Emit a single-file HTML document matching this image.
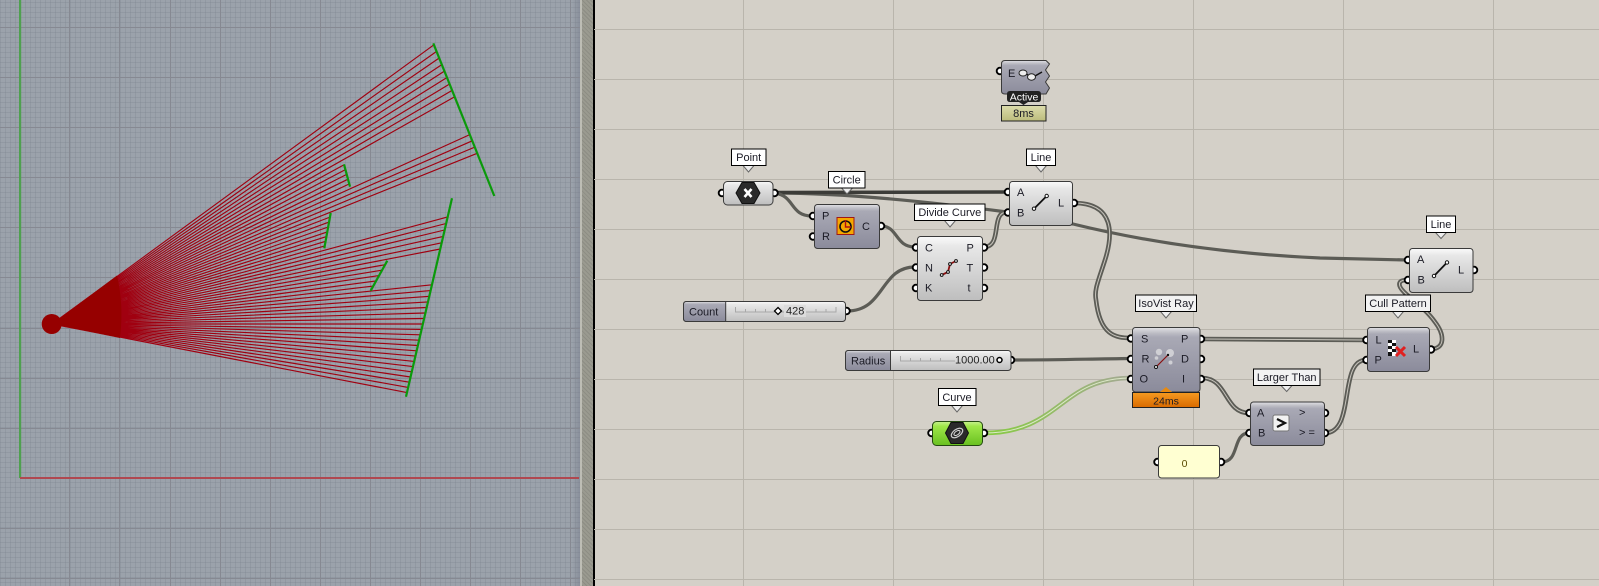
<!DOCTYPE html>
<html><head><meta charset="utf-8"><title>Grasshopper</title>
<style>
html,body{margin:0;padding:0;background:#d4d0c8;width:1599px;height:586px;overflow:hidden}
#v{position:absolute;left:0;top:0;width:580px;height:586px;background-color:#9ba2ab;
background-image:linear-gradient(to right,rgba(120,128,140,.28) 1px,transparent 1px),linear-gradient(to bottom,rgba(120,128,140,.28) 1px,transparent 1px);background-size:5px 5px;background-position:0 2px}
#fade{position:absolute;left:572px;top:0;width:8px;height:586px;background:linear-gradient(to right,rgba(110,115,130,0),rgba(110,115,130,.4))}
#h{position:absolute;left:580px;top:0;width:13px;height:586px;background:repeating-linear-gradient(45deg,#8d8d84 0 1px,#9a9a90 1px 3px);border-left:2px solid #bdbdb5;box-sizing:border-box}
#b{position:absolute;left:593px;top:0;width:1.5px;height:586px;background:#000}
svg{position:absolute;left:0;top:0}
text{font-family:"Liberation Sans",sans-serif;font-size:11px;fill:#1a1a24}
.m{text-anchor:middle}
.c{fill:none;stroke:#b9b5ac;stroke-width:1}
.g{stroke:#868992;stroke-width:1}
.w{fill:none;stroke:#5c5c56;stroke-width:3.2}
.d{fill:none;stroke:#5c5c56;stroke-width:4.6}
.d2{fill:none;stroke:#c8c5bd;stroke-width:1}
.p{fill:#fff;stroke:#000;stroke-width:1.9}
.box{stroke:#3a3a3a;stroke-width:1}
.lb{fill:#fff;stroke:#000;stroke-width:1}
.pt{fill:#eee;stroke:#666;stroke-width:1}
</style></head><body>
<div id="v"></div>
<div id="fade"></div>
<div id="h"></div>
<div id="b"></div>
<svg width="1599" height="586" viewBox="0 0 1599 586">
<defs>
<linearGradient id="dk" x1="0" y1="0" x2="0" y2="1"><stop offset="0" stop-color="#e2e2e6"/><stop offset=".09" stop-color="#bcbcc4"/><stop offset=".15" stop-color="#a9a9b5"/><stop offset="1" stop-color="#8b8b9b"/></linearGradient>
<linearGradient id="lt" x1="0" y1="0" x2="0" y2="1"><stop offset="0" stop-color="#fafafa"/><stop offset=".09" stop-color="#f0f0f0"/><stop offset=".15" stop-color="#e8e8e8"/><stop offset="1" stop-color="#bebebe"/></linearGradient>
<linearGradient id="gr" x1="0" y1="0" x2="0" y2="1"><stop offset="0" stop-color="#c8f090"/><stop offset=".2" stop-color="#9ee648"/><stop offset="1" stop-color="#68c020"/></linearGradient>
<linearGradient id="or" x1="0" y1="0" x2="0" y2="1"><stop offset="0" stop-color="#f59a20"/><stop offset="1" stop-color="#d96a00"/></linearGradient>
<linearGradient id="ms" x1="0" y1="0" x2="0" y2="1"><stop offset="0" stop-color="#dcdcac"/><stop offset="1" stop-color="#bcbc7c"/></linearGradient>
<linearGradient id="gw" gradientUnits="userSpaceOnUse" x1="984" y1="0" x2="1131" y2="0"><stop offset="0" stop-color="#86cc40"/><stop offset="1" stop-color="#a4a894"/></linearGradient>
</defs>

<!-- viewport major grid -->
<g class="g" shape-rendering="crispEdges">
<path d="M69.5 0V586M119.5 0V586M170.5 0V586M220.5 0V586M270.5 0V586M320.5 0V586M370.5 0V586M420.5 0V586M470.5 0V586M520.5 0V586M570.5 0V586"/>
<path d="M0 27.5H580M0 77.5H580M0 127.5H580M0 177.5H580M0 227.5H580M0 277.5H580M0 328.5H580M0 378.5H580M0 428.5H580M0 528.5H580M0 578.5H580"/>
</g>
<rect x="19" y="0" width="2.2" height="478" fill="#4fa04f"/>
<rect x="20" y="477" width="559" height="2" fill="#b04850"/>

<!-- rays -->
<path id="rays" fill="none" stroke="#a00010" stroke-width="1.15"/>
<path d="M52 324L117 275.500Q124 305 120 338Z" fill="#960000"/>
<circle cx="51.7" cy="324" r="10" fill="#960000"/>
<g stroke="#0a9a0a" stroke-width="2.2" fill="none">
<path d="M433.3 43.3L494.3 196"/>
<path d="M344 164.3L350 186.7"/>
<path d="M330.7 213L324.3 248.3"/>
<path d="M452 198.3L406 396.7"/>
<path d="M387.3 260.7L370.7 290.7"/>
</g>

<!-- canvas grid -->
<g class="c" shape-rendering="crispEdges">
<path d="M743.5 0V586M893.5 0V586M1043.5 0V586M1193.5 0V586M1343.5 0V586M1493.5 0V586"/>
<path d="M594 29.5H1599M594 79.5H1599M594 129.5H1599M594 179.5H1599M594 229.5H1599M594 279.5H1599M594 329.5H1599M594 379.5H1599M594 429.5H1599M594 479.5H1599M594 529.5H1599M594 579.5H1599"/>
</g>

<!-- wires -->
<path class="w" d="M775 193C830 193 900 198 1007 212L1073 224C1130 238 1210 253 1320 258L1407 260"/>
<path class="w" style="stroke:#3c3c38;stroke-width:3.4" d="M775 192.500L1007 192"/>
<path class="w" d="M775 193C795 196 790 216 812 216"/>
<path class="w" d="M881 226C898 226 895 247 915 247"/>
<path class="w" d="M847 311C885 311 880 267 915 267"/>
<path class="w" d="M1011 360C1060 360 1085 359 1131 358.500"/>
<path class="w" d="M1222 462C1240 462 1232 433 1249 433"/>
<g>
<path class="d" d="M984 247C1003 247 990 212 1007 212"/>
<path class="d2" d="M984 247C1003 247 990 212 1007 212"/>
<path class="d" d="M1074 203C1115 203 1113 235 1105 260C1098 282 1094 290 1096 300C1100 335 1115 338 1131 338"/>
<path class="d2" d="M1074 203C1115 203 1113 235 1105 260C1098 282 1094 290 1096 300C1100 335 1115 338 1131 338"/>
<path class="d" d="M1202 339L1366 340"/>
<path class="d2" d="M1202 339L1366 340"/>
<path class="d" d="M1202 378C1228 378 1224 413 1249 413"/>
<path class="d2" d="M1202 378C1228 378 1224 413 1249 413"/>
<path class="d" d="M1325 433C1356 433 1338 360 1366 360"/>
<path class="d2" d="M1325 433C1356 433 1338 360 1366 360"/>
<path class="d" d="M1431 349C1445 349 1445 335 1435 322C1425 308 1412 300 1404 292C1397 285 1398 280 1407 280"/>
<path class="d2" d="M1431 349C1445 349 1445 335 1435 322C1425 308 1412 300 1404 292C1397 285 1398 280 1407 280"/>
<path class="d" style="stroke:url(#gw)" d="M984 433C1060 433 1060 378 1131 378"/>
<path class="d2" style="stroke:#dce8c8" d="M984 433C1060 433 1060 378 1131 378"/>
</g>

<!-- ports -->
<g class="p">
<circle cx="722" cy="193" r="3.3"/><circle cx="774.5" cy="193" r="3.3"/>
<circle cx="813" cy="216" r="3.3"/><circle cx="813" cy="236.500" r="3.3"/><circle cx="881" cy="226" r="3.3"/>
<circle cx="1008" cy="192" r="3.3"/><circle cx="1008" cy="212.500" r="3.3"/><circle cx="1074" cy="203" r="3.3"/>
<circle cx="916" cy="247.500" r="3.3"/><circle cx="916" cy="267.500" r="3.3"/><circle cx="916" cy="288" r="3.3"/>
<circle cx="984" cy="247.500" r="3.3"/><circle cx="984" cy="267.500" r="3.3"/><circle cx="984" cy="288" r="3.3"/>
<circle cx="1000" cy="71" r="3.3"/>
<circle cx="1131" cy="338.500" r="3.3"/><circle cx="1131" cy="359" r="3.3"/><circle cx="1131" cy="379" r="3.3"/>
<circle cx="1201" cy="339" r="3.3"/><circle cx="1201" cy="359" r="3.3"/><circle cx="1201" cy="379" r="3.3"/>
<circle cx="1249.500" cy="413" r="3.3"/><circle cx="1249.500" cy="433" r="3.3"/><circle cx="1325" cy="413" r="3.3"/><circle cx="1325" cy="433" r="3.3"/>
<circle cx="1157.500" cy="462" r="3.3"/><circle cx="1221" cy="462" r="3.3"/>
<circle cx="1408" cy="260" r="3.3"/><circle cx="1408" cy="280" r="3.3"/><circle cx="1474" cy="270" r="3.3"/>
<circle cx="1366.500" cy="340" r="3.3"/><circle cx="1366.500" cy="360" r="3.3"/><circle cx="1431" cy="349.500" r="3.3"/>
<circle cx="846.500" cy="311" r="3.3"/><circle cx="1011" cy="360" r="3.3"/>
<circle cx="931.500" cy="433" r="3.3"/><circle cx="984" cy="433" r="3.3"/>
</g>

<!-- Point -->
<rect class="box" x="723.500" y="181.500" width="49.500" height="23.500" rx="4" fill="url(#lt)"/>
<path d="M736 193L742 182.500H754L760 193L754 203.500H742Z" fill="#2a2a2a" stroke="#111"/>
<path d="M744.500 189L751.500 197M751.500 189L744.500 197" stroke="#fff" stroke-width="2.600"/>

<!-- Circle -->
<rect class="box" x="814.500" y="204.500" width="65" height="44" rx="3" fill="url(#dk)"/>
<text x="822" y="219.500">P</text><text x="822" y="240">R</text><text x="862" y="230">C</text>
<rect x="837" y="217.500" width="17" height="17" fill="#f5a800" stroke="#a01818" stroke-width="1"/>
<circle cx="845.500" cy="226.500" r="5.500" fill="none" stroke="#111" stroke-width="1.600"/>
<path d="M845.500 220V227H851" fill="none" stroke="#b01010" stroke-width="1.400"/>

<!-- Line 1 -->
<rect class="box" x="1009.500" y="181.500" width="63" height="44" rx="3" fill="url(#lt)"/>
<text x="1017" y="196">A</text><text x="1017" y="216.500">B</text><text x="1058" y="206.500">L</text>
<path d="M1034 208.700L1046.700 196" stroke="#111" stroke-width="1.800"/>
<circle cx="1034" cy="208.700" r="1.700" fill="#fff" stroke="#111"/><circle cx="1046.700" cy="196" r="1.700" fill="#fff" stroke="#111"/>

<!-- Divide Curve -->
<rect class="box" x="917.500" y="236.500" width="65" height="64" rx="3" fill="url(#lt)"/>
<text x="925" y="251.500">C</text><text x="925" y="271.500">N</text><text x="925" y="291.500">K</text>
<text x="966.500" y="251.500">P</text><text x="966.500" y="271.500">T</text><text x="967.500" y="291.500">t</text>
<path d="M941.700 275L948 272L950 264L956 261" fill="none" stroke="#8a1010" stroke-width="1.800"/>
<g fill="#fff" stroke="#111"><circle cx="941.700" cy="275" r="1.400"/><circle cx="948" cy="272" r="1.400"/><circle cx="950" cy="264" r="1.400"/><circle cx="956" cy="261" r="1.400"/></g>

<!-- E component -->
<path class="box" d="M1005 60.500H1046L1049.500 64L1045.500 70L1049.500 76L1045.500 82L1049.500 88L1046 94H1005Q1001.500 94 1001.500 91V64Q1001.500 60.500 1005 60.500Z" fill="url(#dk)"/>
<text x="1008" y="77">E</text>
<path d="M1026 74L1028 75M1035 76L1042 72" fill="none" stroke="#111" stroke-width="1.400"/>
<ellipse cx="1023" cy="73" rx="4" ry="3" fill="#eee" stroke="#222"/>
<ellipse cx="1031.500" cy="77" rx="4" ry="3.200" fill="#eee" stroke="#222"/>
<rect x="1001.500" y="105.500" width="44.500" height="15.500" fill="url(#ms)" stroke="#222"/>
<text class="m" x="1023.500" y="117">8ms</text>
<path d="M1010 91H1038Q1041 91 1041 94V99Q1041 102 1038 102H1028L1023.500 105L1019 102H1010Q1007 102 1007 99V94Q1007 91 1010 91Z" fill="#222"/>
<text class="m" x="1024" y="100.500" style="fill:#fff;font-size:10.500px">Active</text>

<!-- IsoVist -->
<rect class="box" x="1132.500" y="327.500" width="67.500" height="64.500" rx="3" fill="url(#dk)"/>
<text x="1141" y="342.500">S</text><text x="1141.500" y="362.500">R</text><text x="1139.500" y="382.500">O</text>
<text x="1181" y="342.500">P</text><text x="1181" y="362.500">D</text><text x="1182" y="382.500">I</text>
<g fill="#cfcfd4"><circle cx="1159" cy="352" r="3.200"/><circle cx="1170" cy="353" r="4"/><circle cx="1156.500" cy="358" r="1.800"/><circle cx="1170.500" cy="362.500" r="2"/></g>
<path d="M1156 367L1168 355" stroke="#8a1010" stroke-width="1.200"/>
<circle cx="1156" cy="367" r="1.500" fill="#fff" stroke="#111"/><circle cx="1168" cy="355" r="1.200" fill="#111"/>
<rect x="1132.500" y="392.500" width="67" height="15" fill="url(#or)" stroke="#222"/>
<text class="m" x="1166" y="404.500" style="font-size:10.500px">24ms</text>
<path d="M1160 392L1166 387L1172 392Z" fill="#e88a10"/>

<!-- Larger than -->
<rect class="box" x="1250.500" y="402" width="74" height="43.500" rx="3" fill="url(#dk)"/>
<text x="1257" y="416.500">A</text><text x="1258" y="436.500">B</text>
<text x="1299" y="416">&gt;</text><text x="1299" y="436">&gt; =</text>
<rect x="1273" y="415" width="16" height="16" rx="2" fill="#f2f2f2" stroke="#777"/>
<path d="M1277 419L1285 423L1277 427" fill="none" stroke="#111" stroke-width="2.200"/>

<!-- Panel 0 -->
<rect class="box" x="1158.500" y="445.500" width="61" height="32.500" rx="3" fill="#ffffd2"/>
<text class="m" x="1184.500" y="467" style="font-size:10.500px;fill:#5a4a00">0</text>

<!-- Line 2 -->
<rect class="box" x="1409.500" y="248.500" width="63.500" height="44" rx="3" fill="url(#lt)"/>
<text x="1417" y="263">A</text><text x="1417.500" y="283.500">B</text><text x="1458" y="273.500">L</text>
<path d="M1434 276L1447 262.500" stroke="#111" stroke-width="1.800"/>
<circle cx="1434" cy="276" r="1.700" fill="#fff" stroke="#111"/><circle cx="1447" cy="262.500" r="1.700" fill="#fff" stroke="#111"/>

<!-- Cull -->
<rect class="box" x="1367.500" y="327.500" width="62" height="44" rx="3" fill="url(#dk)"/>
<text x="1375.500" y="343.500">L</text><text x="1374.500" y="363.500">P</text><text x="1413" y="352.500">L</text>
<rect x="1388" y="340" width="8" height="16" fill="#fff"/>
<path d="M1388 340h4v3h-4zM1392 343h4v3h-4zM1388 346h4v3h-4zM1392 349h4v3h-4zM1388 352h4v4h-4z" fill="#111"/>
<path d="M1396 347L1405 356M1405 347L1396 356" stroke="#e02020" stroke-width="3"/>

<!-- Count slider -->
<rect class="box" x="683.500" y="301.500" width="162" height="20" rx="3" fill="url(#lt)"/>
<path d="M686.500 301.500H725.700V321.500H686.500Q683.500 321.500 683.500 318.500V304.500Q683.500 301.500 686.500 301.500Z" fill="url(#dk)" stroke="#3a3a3a"/>
<text x="689" y="315.500">Count</text>
<path d="M735.500 307V312H836V307M745.500 309V312M755.500 309V312M765.500 309V312M816 309V312M826 309V312" fill="none" stroke="#a8a8a8" stroke-width="1"/>
<path d="M778 307.500L781.500 311L778 314.500L774.500 311Z" fill="#fff" stroke="#000" stroke-width="1.300"/>
<rect x="784" y="305" width="22" height="12" fill="#dcdcdc"/>
<text x="786" y="314.500" style="fill:#222">428</text>

<!-- Radius slider -->
<rect class="box" x="845.500" y="350.500" width="165.500" height="20" rx="3" fill="url(#lt)"/>
<path d="M848.500 350.500H890.500V370.500H848.500Q845.500 370.500 845.500 367.500V353.500Q845.500 350.500 848.500 350.500Z" fill="url(#dk)" stroke="#3a3a3a"/>
<text x="851" y="364.500">Radius</text>
<path d="M900.500 356V361H955M910.500 358V361M920.500 358V361M930.500 358V361M940.500 358V361" fill="none" stroke="#a8a8a8"/>
<text x="955" y="363.500" style="fill:#222">1000.00</text>
<circle cx="999.500" cy="360" r="2.500" fill="#fff" stroke="#000" stroke-width="1.500"/>

<!-- Curve -->
<rect class="box" x="932.500" y="421.500" width="50" height="24" rx="4" fill="url(#gr)" style="stroke:#244a10"/>
<path d="M945.500 433L951 422.500H963L968.500 433L963 443.500H951Z" fill="#2a2a2a" stroke="#111"/>
<ellipse cx="957" cy="433" rx="6.500" ry="3.600" transform="rotate(-35 957 433)" fill="none" stroke="#ccc" stroke-width="1.200"/>
<ellipse cx="957" cy="433" rx="3.500" ry="1.800" transform="rotate(-35 957 433)" fill="none" stroke="#ddd" stroke-width="1"/>

<!-- Labels -->
<g>
<path class="pt" d="M743 165.500L748.500 172L754 165.500"/><rect class="lb" x="731.500" y="149" width="34.500" height="16.500"/><text class="m" x="748.700" y="161">Point</text>
<path class="pt" d="M841.500 188L847 194L852.500 188"/><rect class="lb" x="828.500" y="171.500" width="36.500" height="16.500"/><text class="m" x="846.700" y="183.500">Circle</text>
<path class="pt" d="M1035.500 165.500L1041 172L1046.500 165.500"/><rect class="lb" x="1026.500" y="149" width="29" height="16.500"/><text class="m" x="1041" y="161">Line</text>
<path class="pt" d="M944.500 220.500L950 227L955.500 220.500"/><rect class="lb" x="914.500" y="204" width="70.500" height="16.500"/><text class="m" x="949.800" y="216">Divide Curve</text>
<path class="pt" d="M1160.500 311.500L1166 318L1171.500 311.500"/><rect class="lb" x="1135.500" y="295" width="61" height="16.500" style="fill:#f2f2f2"/><text class="m" x="1166" y="307">IsoVist Ray</text>
<path class="pt" d="M1281 385.500L1286.700 391.500L1292 385.500"/><rect class="lb" x="1253.500" y="369" width="66.500" height="16.500" style="fill:#f2f2f2"/><text class="m" x="1286.700" y="381">Larger Than</text>
<path class="pt" d="M1435.500 232.500L1441 238.500L1446.500 232.500"/><rect class="lb" x="1426.500" y="216" width="29" height="16.500"/><text class="m" x="1441" y="228">Line</text>
<path class="pt" d="M1392.500 311.500L1398 318L1403.500 311.500"/><rect class="lb" x="1365.500" y="295" width="65" height="16.500" style="fill:#f2f2f2"/><text class="m" x="1398" y="307">Cull Pattern</text>
<path class="pt" d="M951.500 405.500L957 412L962.500 405.500"/><rect class="lb" x="938.500" y="388.500" width="37.500" height="17"/><text class="m" x="957" y="401">Curve</text>
</g>
</svg>
<script>
(function(){
var O=[52,324],S=[[433.3,43.3,494.3,196],[344,164.3,350,186.7],[330.7,213,324.3,248.3],[452,198.3,406,396.7],[387.3,260.7,370.7,290.7]],d="";
for(var k=-13;k<=43;k++){
 var a=k*Math.PI/214,dx=Math.cos(a),dy=-Math.sin(a),best=1e9;
 for(var i=0;i<S.length;i++){
  var s=S[i],ex=s[2]-s[0],ey=s[3]-s[1],den=dx*ey-dy*ex;
  if(Math.abs(den)<1e-9)continue;
  var t=((s[0]-O[0])*ey-(s[1]-O[1])*ex)/den,u=((s[0]-O[0])*dy-(s[1]-O[1])*dx)/den;
  if(t>0&&u>=-0.01&&u<=1.01&&t<best)best=t;
 }
 if(best<1e9)d+="M52 324L"+(O[0]+dx*best).toFixed(1)+" "+(O[1]+dy*best).toFixed(1);
}
document.getElementById("rays").setAttribute("d",d);
})();
</script>
</body></html>
